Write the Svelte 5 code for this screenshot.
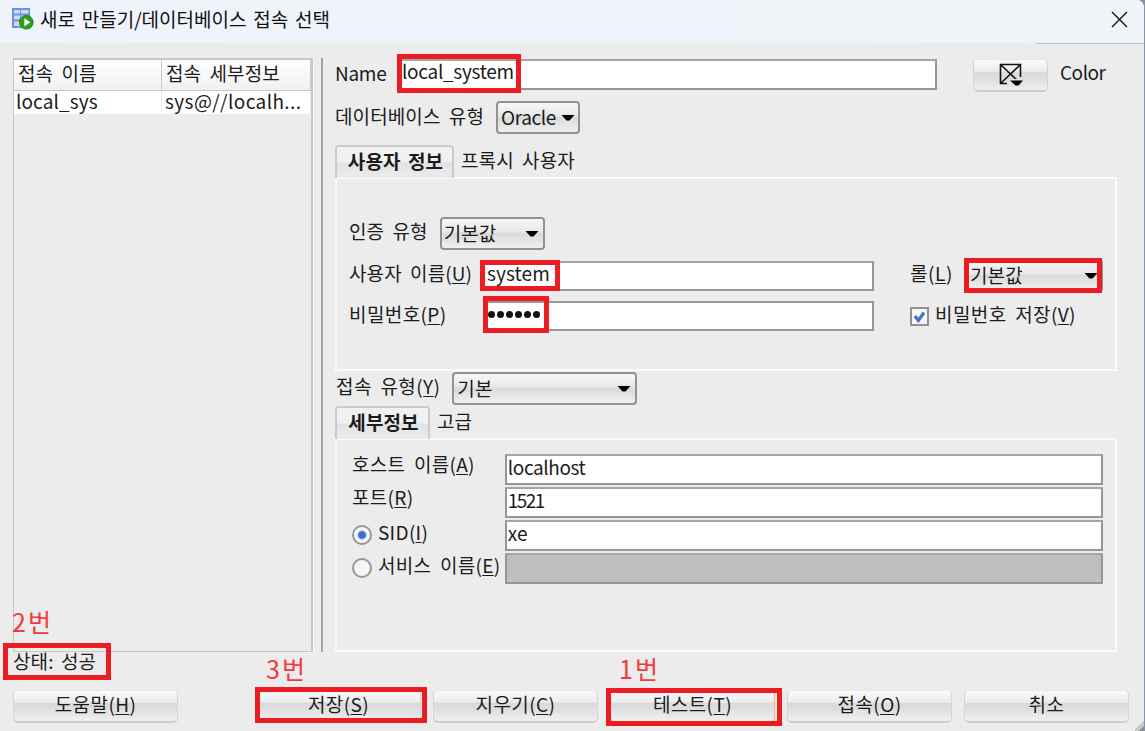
<script>
  const connections = [
    { name: 'local_sys', details: 'sys@//localh...' }
  ];

  const actions = [
    { text: '도움말', key: 'H' },
    { text: '저장', key: 'S' },
    { text: '지우기', key: 'C' },
    { text: '테스트', key: 'T', primary: true },
    { text: '접속', key: 'O' },
    { text: '취소' }
  ];

  // callouts drawn over the dialog
  const boxes = [
    { x: 397, y: 54, w: 124, h: 39 },
    { x: 480, y: 260, w: 80, h: 31 },
    { x: 483, y: 296, w: 66, h: 37 },
    { x: 964, y: 258, w: 138, h: 35 },
    { x: 3, y: 643, w: 108, h: 37 },
    { x: 255, y: 687, w: 172, h: 36 },
    { x: 606, y: 688, w: 176, h: 38 }
  ];

  const steps = [
    { text: '1번', x: 619, y: 654 },
    { text: '2번', x: 12, y: 607 },
    { text: '3번', x: 266, y: 654 }
  ];

  let name = $state('local_system');
  let username = $state('system');
  let host = $state('localhost');
  let port = $state('1521');
  let sid = $state('xe');
  let savePassword = $state(true);
  let target = $state('sid');
</script>

{#snippet label(text, key)}
  <span class="label">{text}{#if key}(<u>{key}</u>){/if}</span>
{/snippet}

{#snippet combo(text, kind)}
  <button type="button" class="combo {kind}">
    <span>{text}</span>
    <svg width="14" height="8" viewBox="0 0 14 8"><path d="M0.5 1h13L8.5 6.5h-3z" /></svg>
  </button>
{/snippet}

<div class="dialog">
  <header>
    <svg class="app-icon" width="24" height="24" viewBox="0 0 24 24">
      <path d="M1 1h18v20H1z" fill="#6a92d6" />
      <path d="M3 3h6v3.5H3zM10 3h7.5v3.5H10zM3 8.5h6v4H3zM10 8.5h7.5v4H10zM3 14.5h6V19H3zM10 14.5h7.5V19H10z" fill="#c9dbf6" />
      <circle cx="15.3" cy="15.3" r="6.8" fill="#2fa01a" stroke="#1b820f" />
      <path d="M13.3 11.3v8l6-4z" fill="#fff" />
    </svg>
    <h1>새로 만들기/데이터베이스 접속 선택</h1>
    <button type="button" class="close" aria-label="닫기">
      <svg width="17" height="17" viewBox="0 0 17 17"><path d="M1 1l15 15M16 1L1 16" /></svg>
    </button>
  </header>

  <main>
    <section class="connections">
      <div class="row head">
        <span>접속 이름</span>
        <span>접속 세부정보</span>
      </div>
      {#each connections as connection}
        <div class="row">
          <span>{connection.name}</span>
          <span class="details">{connection.details}</span>
        </div>
      {/each}
    </section>

    <div class="splitter"></div>

    <section class="form">
      <div class="line name-line">
        {@render label('Name')}
        <input class="name" bind:value={name} />
        <button type="button" class="push color" aria-label="Color">
          <svg width="24" height="24" viewBox="0 0 24 24">
            <path d="M8 20.5H1.5v-19h20V14M1.5 1.5l20 19M21.5 1.5l-20 19" fill="none" stroke="#111" stroke-width="1.6" />
            <path d="M10 16h15v8H10z" fill="#e2e2e2" />
            <path d="M11 17.5h13l-4.5 5h-3z" />
          </svg>
        </button>
        <span class="color-label">{@render label('Color')}</span>
      </div>

      <div class="line type-line">
        {@render label('데이터베이스 유형')}
        {@render combo('Oracle', 'database')}
      </div>

      <div class="tabs user-tabs">
        <button type="button" class="tab active">사용자 정보</button>
        <button type="button" class="tab">프록시 사용자</button>
      </div>
      <div class="panel user-panel">
        <div class="line auth-line">
          {@render label('인증 유형')}
          {@render combo('기본값', 'auth')}
        </div>
        <div class="line user-line">
          {@render label('사용자 이름', 'U')}
          <input bind:value={username} />
          <div class="side role-side">
            {@render label('롤', 'L')}
            {@render combo('기본값', 'role')}
          </div>
        </div>
        <div class="line password-line">
          {@render label('비밀번호', 'P')}
          <div class="password">
            {#each { length: 6 } as _}<i></i>{/each}
          </div>
          <label class="side">
            <input type="checkbox" bind:checked={savePassword} />
            <svg class="check" width="19" height="19" viewBox="0 0 19 19">
              <rect x="1" y="1" width="17" height="17" />
              {#if savePassword}<path d="M5 9l3.3 4.5L14 5.5" />{/if}
            </svg>
            {@render label('비밀번호 저장', 'V')}
          </label>
        </div>
      </div>

      <div class="line connection-line">
        {@render label('접속 유형', 'Y')}
        {@render combo('기본', 'connection')}
      </div>

      <div class="tabs detail-tabs">
        <button type="button" class="tab active">세부정보</button>
        <button type="button" class="tab">고급</button>
      </div>
      <div class="panel detail-panel">
        <div class="line raised">
          {@render label('호스트 이름', 'A')}
          <input class="host" bind:value={host} />
        </div>
        <div class="line raised">
          {@render label('포트', 'R')}
          <input class="port" bind:value={port} />
        </div>
        <div class="line">
          <label class="choice">
            <input type="radio" value="sid" bind:group={target} />
            <span class="radio"></span>
            {@render label('SID', 'I')}
          </label>
          <input bind:value={sid} disabled={target !== 'sid'} />
        </div>
        <div class="line">
          <label class="choice">
            <input type="radio" value="service" bind:group={target} />
            <span class="radio"></span>
            {@render label('서비스 이름', 'E')}
          </label>
          <input disabled={target !== 'service'} />
        </div>
      </div>
    </section>
  </main>

  <p class="status">상태: 성공</p>

  <footer>
    {#each actions as action}
      <button type="button" class="push" class:primary={action.primary}>
        {@render label(action.text, action.key)}
      </button>
    {/each}
  </footer>

  <svg class="grip" width="9" height="9" viewBox="0 0 9 9">
    <path d="M4 9l5-5v5z" fill="#7d8f9d" />
    <path d="M0 9L9 0M3 9l6-6" stroke="#b5b5a0" stroke-width="1.4" />
  </svg>

  {#each boxes as box}
    <div class="box" style={`left: ${box.x}px; top: ${box.y}px; width: ${box.w}px; height: ${box.h}px`}></div>
  {/each}
  {#each steps as step}
    <span class="step" style={`left: ${step.x}px; top: ${step.y}px`}>{step.text}</span>
  {/each}
</div>

<style>
  :global(body) {
    margin: 0;
    overflow: hidden;
    background: #8494a5;
  }

  .dialog,
  .dialog * {
    box-sizing: border-box;
  }

  .dialog {
    position: relative;
    display: flex;
    flex-direction: column;
    width: 1145px;
    height: 731px;
    overflow: hidden;
    border-right: 1px solid #8494a5;
    border-top-right-radius: 8px;

    background: #ececec;
    color: #1c1c1c;

    font-family: 'Noto Sans CJK KR', sans-serif;
    font-size: 19px;
    line-height: 24px;
    letter-spacing: 0.1px;
    word-spacing: 4px;
    white-space: nowrap;
  }

  header {
    display: flex;
    flex: 0 0 43px;
    align-items: center;
    padding: 0 16px 4px 11px;
    background: linear-gradient(90deg, #eff3fb, #eef4f8);
  }

  .app-icon {
    position: relative;
    top: -1px;
  }

  h1 {
    position: relative;
    top: -1px;
    margin: 0 auto 0 5px;
    color: #111;
    font-size: 19px;
    font-weight: 400;
    letter-spacing: 0;
    word-spacing: 2.5px;
  }

  button,
  input {
    margin: 0;
    padding: 0;
    color: inherit;
    font: inherit;
    letter-spacing: inherit;
    word-spacing: inherit;
  }

  .close {
    display: flex;
    border: 0;
    background: none;
  }

  .close path {
    fill: none;
    stroke: #111;
    stroke-width: 1.4;
  }

  main {
    display: flex;
    flex: 0 0 609px;
    padding: 15px 0 0 13px;
    background: linear-gradient(#bebebe, #bebebe) 100% 0 / 108px 1px no-repeat;
  }

  .connections {
    width: 300px;
    border: 2px solid #c8c8c8;
    border-width: 2px 2px 1px 1px;
  }

  .row {
    display: grid;
    grid-template-columns: 148px 1fr;
    height: 23px;
    background: #fff;
  }

  .row span {
    padding-left: 2px;
    border-right: 1px solid #eee;
    line-height: 19px;
  }

  .row .details {
    padding-left: 3px;
    letter-spacing: 0.4px;
  }

  .row.head {
    height: 31px;
    border-bottom: 1px solid #c8c8c8;
    background: linear-gradient(#fff, #f1f1f1);
  }

  .row.head span {
    padding-left: 4px;
    border-color: #ccc;
    line-height: 26px;
  }

  .splitter {
    width: 10px;
    margin-right: 12px;
    border-right: 2px solid #a2a2a2;
    border-left: 1px solid #f8f8f8;
  }

  .form {
    width: 782px;
  }

  .line {
    display: flex;
    align-items: center;
  }

  .label {
    position: relative;
    top: -2px;
  }

  u {
    text-underline-offset: 2px;
    text-decoration-thickness: 1px;
  }

  input:not([type]) {
    height: 31px;
    padding: 0 1px 7px;
    border: 2px solid #969696;
    border-top-color: #a5a5a5;
    border-radius: 0;
    background: #fff;
    outline: none;
  }

  input:disabled {
    background: #bfbfbf !important;
  }

  .push {
    width: 165px;
    height: 33px;
    border: 1px solid #d5d5d5;
    border-top-color: #e8e8e8;
    border-bottom: 2px solid #cecece;
    border-radius: 5px;
    background: linear-gradient(#fafafa 0%, #ececec 38%, #d9d9d9 40%, #dedede 60%, #f0f0f0 100%);
  }

  .name-line {
    height: 32px;
  }

  .name-line > .label {
    top: -1px;
    width: 52px;
    letter-spacing: -0.3px;
  }

  input.name:not([type]) {
    width: 540px;
    margin-left: 10px;
    padding-left: 3px;
    letter-spacing: -0.3px;
  }

  .push.color {
    display: grid;
    width: 75px;
    margin: 2px 12px 0 36px;
    place-items: center;
  }

  .color-label {
    letter-spacing: -0.5px;
  }

  .type-line {
    height: 33px;
    margin-top: 11px;
  }

  .combo {
    display: flex;
    align-items: center;
    justify-content: space-between;
    height: 33px;
    padding: 0 4px;
    border: 2px solid #929292;
    border-radius: 4px;
    background: linear-gradient(#f7f7f7, #e8e8e8 45%, #dadada 50%, #f0f0f0);
  }

  .combo span {
    position: relative;
    top: -1px;
  }

  .combo.database {
    width: 84px;
    margin-left: 12px;
    padding: 0 3px;
    letter-spacing: -0.4px;
  }

  .tabs {
    display: flex;
    height: 33px;
  }

  .user-tabs {
    margin-top: 11px;
  }

  .tab {
    padding: 0 5px 3px 7px;
    border: 0;
    background: none;
  }

  .tab.active {
    width: 119px;
    padding: 0 0 4px 2px;
    border: 2px solid #cacaca;
    border-bottom: 0;
    border-radius: 4px 4px 0 0;
    background: linear-gradient(#f1f1f2 0 48%, #e1e2e6 52%, #ececec);
    font-weight: 700;
    word-spacing: 3px;
  }

  .panel {
    border: 2px solid #fafafa;
  }

  .user-panel {
    height: 194px;
    margin-top: -1px;
    padding: 38px 12px 0;
  }

  .combo.auth {
    width: 105px;
    margin-left: 12px;
    padding-left: 2px;
  }

  .auth-line .label,
  .user-line .label {
    top: -3px;
  }

  .user-line {
    height: 35px;
    margin-top: 8px;
  }

  .user-line > .label,
  .password-line > .label {
    width: 132px;
  }

  .user-line input:not([type]) {
    width: 393px;
    height: 30px;
    padding-left: 4px;
  }

  .side {
    display: flex;
    align-items: center;
    margin-left: 36px;
  }

  .role-side .label {
    letter-spacing: 0.6px;
  }

  .combo.role {
    width: 139px;
    margin-left: 11px;
    padding-right: 3px;
  }

  .password-line {
    height: 30px;
    margin-top: 8px;
  }

  .password-line .label {
    letter-spacing: 0.4px;
  }

  .password {
    display: flex;
    gap: 2px;
    align-items: center;
    width: 389px;
    height: 30px;
    margin-left: 4px;
    padding: 0 0 3px 1px;
    border: 2px solid #969696;
    background: #fff;
  }

  .password i {
    width: 7px;
    height: 7px;
    border-radius: 50%;
    background: #111;
  }

  .side input,
  .choice input {
    position: absolute;
    opacity: 0;
  }

  .check {
    margin-right: 6px;
  }

  .check rect {
    fill: #f6f6f8;
    stroke: #929292;
    stroke-width: 2;
  }

  .check path {
    fill: none;
    stroke: #3f75c9;
    stroke-width: 3.2;
  }

  .connection-line {
    height: 34px;
    padding-top: 1px;
  }

  .connection-line > .label {
    top: -3px;
    left: 1px;
    letter-spacing: 0.4px;
  }

  .combo.connection {
    width: 185px;
    margin-left: 13px;
    padding-left: 3px;
  }

  .detail-tabs {
    margin-top: 1px;
  }

  .detail-tabs .tab.active {
    width: 95px;
  }

  .detail-panel {
    display: flex;
    flex-direction: column;
    gap: 2px;
    height: 214px;
    margin-top: -1px;
    padding: 14px 12px 0 15px;
  }

  .detail-panel .line > :first-child {
    width: 153px;
    letter-spacing: 0.3px;
  }

  .detail-panel .line > input {
    width: 599px;
  }

  .raised > .label {
    top: -6px;
  }

  .host {
    letter-spacing: -0.4px;
  }

  .port {
    letter-spacing: -1.6px;
  }

  .choice {
    display: flex;
    align-items: center;
  }

  .choice .label {
    top: -4px;
  }

  .radio {
    position: relative;
    top: -1px;
    width: 20px;
    height: 20px;
    margin-right: 6px;
    border: 2px solid #979797;
    border-radius: 50%;
    background: #f5f5f5;
  }

  input:checked + .radio {
    background: radial-gradient(circle, #3c6cc4 3px, #7fa3df 4px, #f5f5f8 5px);
  }

  .status {
    margin: -3px 0 0 13px;
    line-height: 24px;
    word-spacing: 3px;
  }

  footer {
    display: flex;
    gap: 12px;
    margin: 17px 0 0 13px;
  }

  footer .push:first-child {
    margin-right: 66px;
  }

  footer .label {
    letter-spacing: 0.4px;
  }

  .primary {
    border-color: #f0bd68;
  }

  .grip {
    position: absolute;
    right: 0;
    bottom: 0;
  }

  .box {
    position: absolute;
    border: 5px solid #ed1c24;
    pointer-events: none;
  }

  .step {
    position: absolute;
    color: #f03a40;
    font-size: 25px;
    line-height: 28px;
    letter-spacing: 2px;
    pointer-events: none;
  }
</style>
